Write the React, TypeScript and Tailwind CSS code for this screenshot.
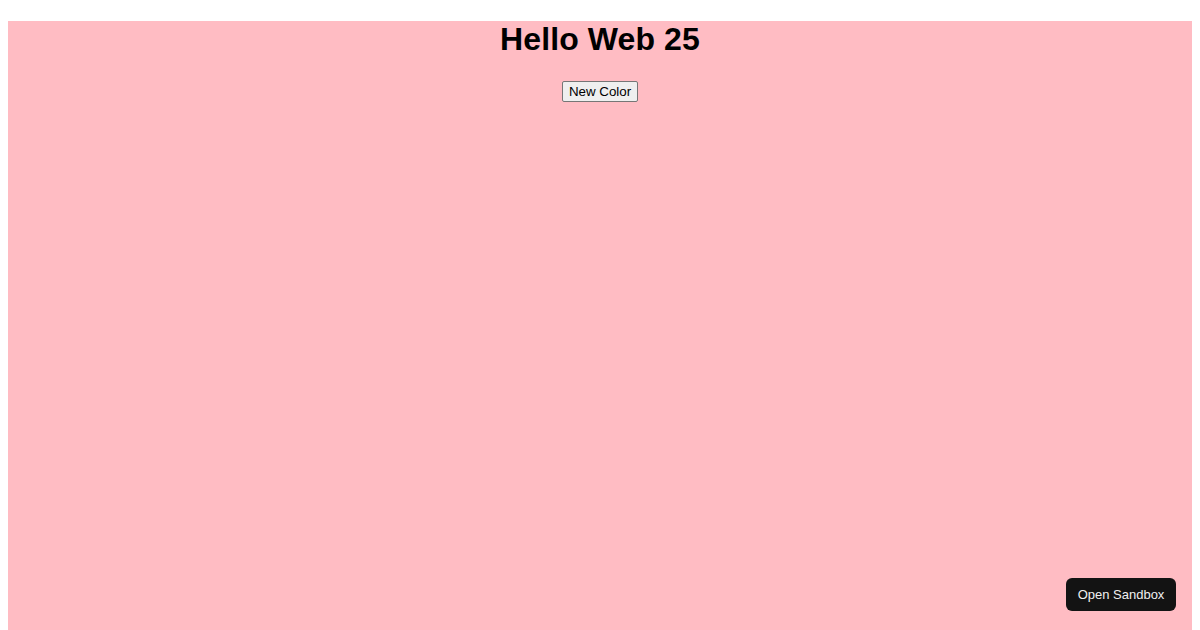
import React from 'react';

export default function App() {
  return (
    <div className="min-h-[630px] bg-white px-2 pt-[21px] font-['Liberation_Sans',Arial,sans-serif] text-black">
      <div className="min-h-[609px] bg-[#ffbcc3] text-center">
        <h1 className="text-[32px] font-bold leading-[37px] tracking-[0.1px]">Hello Web 25</h1>
        <div className="mt-[21px]">
          <button className="h-[21px] rounded-[2px] border border-[#767676] bg-[#efefef] px-[6px] text-[13.33px] leading-[17px]">
            New Color
          </button>
        </div>
      </div>

      {/* Floating sandbox link */}
      <button className="fixed right-[24px] bottom-[19px] flex h-[33px] w-[110px] items-center justify-center rounded-md bg-[#131313] text-[13px] text-[#f0f0f0]">
        Open Sandbox
      </button>
    </div>
  );
}
